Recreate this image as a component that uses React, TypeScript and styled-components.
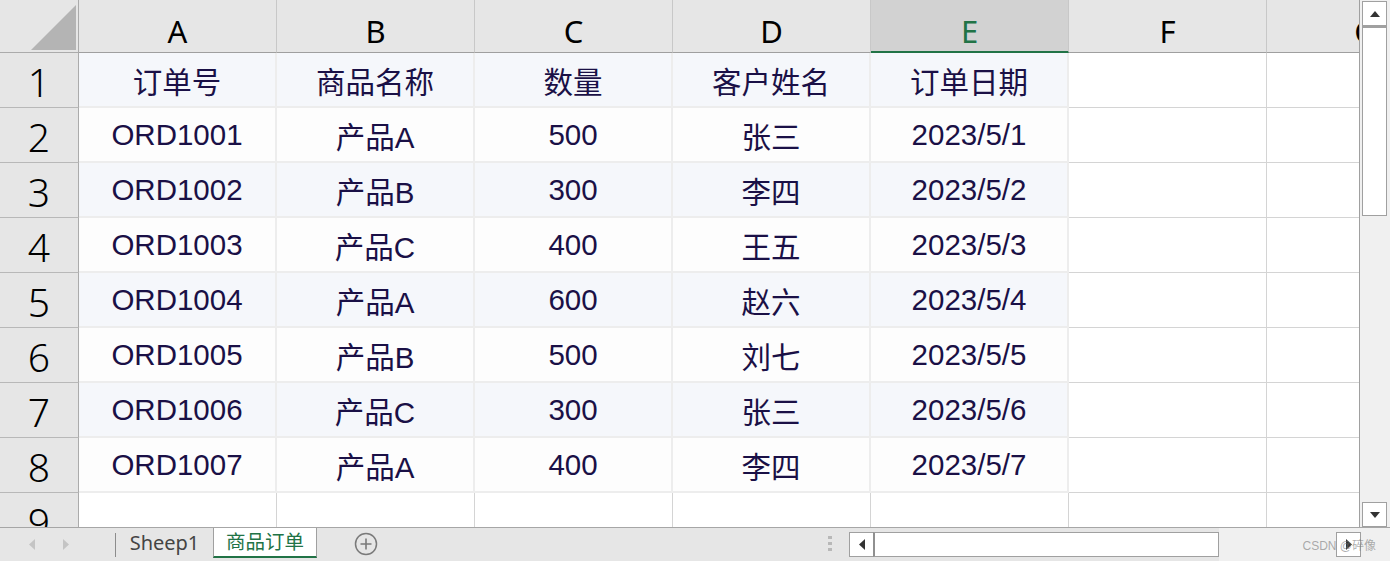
import React from 'react';
import styled, { createGlobalStyle, css } from 'styled-components';

const GlobalStyle = createGlobalStyle`
  html, body {
    margin: 0;
    padding: 0;
    background: #e6e6e6;
    overflow: hidden;
  }
  body {
    font-family: "Liberation Sans", "Noto Sans CJK SC", sans-serif;
  }
`;

const COLUMNS = ['A', 'B', 'C', 'D', 'E', 'F', 'G'];
const SELECTED_COL = 4;
const DATA_COLS = 5;

const TABLE: string[][] = [
  ['订单号', '商品名称', '数量', '客户姓名', '订单日期'],
  ['ORD1001', '产品A', '500', '张三', '2023/5/1'],
  ['ORD1002', '产品B', '300', '李四', '2023/5/2'],
  ['ORD1003', '产品C', '400', '王五', '2023/5/3'],
  ['ORD1004', '产品A', '600', '赵六', '2023/5/4'],
  ['ORD1005', '产品B', '500', '刘七', '2023/5/5'],
  ['ORD1006', '产品C', '300', '张三', '2023/5/6'],
  ['ORD1007', '产品A', '400', '李四', '2023/5/7'],
];
const ROW_COUNT = 9;

const Window = styled.div`
  width: 1390px;
  height: 561px;
  display: flex;
  flex-direction: column;
  background: #e6e6e6;
`;

const Main = styled.div`
  height: 527px;
  display: flex;
  overflow: hidden;
`;

const Viewport = styled.div`
  width: 1359px;
  flex: none;
  overflow: hidden;
  background: #fff;
`;

const Grid = styled.div`
  display: grid;
  grid-template-columns: 79px repeat(7, 198px);
  grid-template-rows: 53px repeat(${ROW_COUNT}, 55px);
  width: max-content;
`;

const Corner = styled.div`
  background: #e6e6e6;
  border-right: 1px solid #ababab;
  border-bottom: 1px solid #ababab;
  display: flex;
  justify-content: flex-end;
  align-items: flex-end;
  padding: 0 2px 2px 0;
`;

const ColHead = styled.div<{ $selected?: boolean }>`
  background: #e6e6e6;
  border-right: 1px solid #c8c8c8;
  border-bottom: 1px solid #9f9f9f;
  display: flex;
  justify-content: center;
  align-items: flex-end;
  padding-bottom: 5px;
  font-family: "Noto Sans", "Liberation Sans", sans-serif;
  font-size: 31px;
  line-height: 1;
  color: #000;
  ${({ $selected }) =>
    $selected &&
    css`
      background: #d2d2d2;
      color: #217346;
      border-bottom: 2px solid #217346;
      padding-bottom: 4px;
    `}
`;

const RowHead = styled.div`
  background: #e6e6e6;
  border-right: 1px solid #ababab;
  border-bottom: 1px solid #b8b8b8;
  display: flex;
  justify-content: center;
  align-items: center;
  padding-top: 3px;
  font-family: "Noto Sans", "Liberation Sans", sans-serif;
  font-weight: 300;
  font-size: 39px;
  line-height: 1;
  color: #000;
`;

const DataCell = styled.div<{ $striped: boolean }>`
  background: ${({ $striped }) => ($striped ? '#f5f7fb' : '#fdfdfd')};
  border-right: 2px solid #ededed;
  border-bottom: 2px solid #ededed;
  display: flex;
  justify-content: center;
  align-items: center;
  font-size: 29.5px;
  color: #1a1046;
  white-space: nowrap;
`;

const EmptyCell = styled.div`
  background: #fff;
  border-right: 1px solid #d4d4d4;
  border-bottom: 1px solid #d4d4d4;
`;

const VScroll = styled.div`
  width: 31px;
  flex: none;
  box-sizing: border-box;
  border-left: 1px solid #a0a0a0;
  background: #f0f0f0;
  padding: 1px 3px 0 2px;
  display: flex;
  flex-direction: column;
`;

const ScrollButton = styled.div`
  width: 25px;
  height: 25px;
  flex: none;
  background: #fff;
  border: 1px solid #a0a0a0;
  box-sizing: border-box;
  display: flex;
  align-items: center;
  justify-content: center;
`;

const VThumb = styled.div`
  height: 190px;
  flex: none;
  background: #fff;
  border: 1px solid #a0a0a0;
  border-top-width: 2px;
  box-sizing: border-box;
`;

const VTrack = styled.div`
  flex: 1;
`;

const TabBar = styled.div`
  position: relative;
  height: 34px;
  box-sizing: border-box;
  border-top: 1px solid #a6a6a6;
  display: flex;
  align-items: stretch;
  font-family: "Noto Sans", "Liberation Sans", "Noto Sans CJK SC", sans-serif;
`;

const NavArrows = styled.div`
  width: 115px;
  flex: none;
  display: flex;
  align-items: center;
  gap: 28px;
  padding-left: 29px;
  box-sizing: border-box;
`;

const Divider = styled.div`
  width: 1px;
  height: 24px;
  flex: none;
  align-self: center;
  background: #8c8c8c;
`;

const SheetTab = styled.div<{ $active?: boolean }>`
  width: 97px;
  flex: none;
  display: flex;
  justify-content: center;
  align-items: center;
  padding-bottom: 4px;
  font-size: 20px;
  color: #444;
  box-sizing: border-box;
  ${({ $active }) =>
    $active &&
    css`
      width: 104px;
      height: 30px;
      padding-bottom: 3px;
      background: #fff;
      color: #217346;
      border-left: 1px solid #a0a0a0;
      border-right: 1px solid #a0a0a0;
      border-bottom: 2px solid #217346;
      font-family: "Noto Sans CJK SC", sans-serif;
      font-size: 19.5px;
    `}
`;

const AddSheet = styled.div`
  margin-left: 37px;
  width: 24px;
  flex: none;
  display: flex;
  align-items: center;
  padding-bottom: 2px;
`;

const Grip = styled.div`
  margin-left: 450px;
  width: 4px;
  flex: none;
  display: flex;
  flex-direction: column;
  justify-content: center;
  gap: 3px;
  padding-bottom: 2px;
  & > span {
    width: 4px;
    height: 3px;
    background: #b8b8b8;
  }
`;

const HScroll = styled.div`
  margin-left: 17px;
  flex: 1;
  display: flex;
  align-items: center;
`;

const HThumb = styled.div`
  width: 346px;
  height: 25px;
  flex: none;
  background: #fff;
  border: 1px solid #a0a0a0;
  border-left-width: 2px;
  border-left-color: #909090;
  box-sizing: border-box;
  margin-left: -1px;
`;

const HTrack = styled.div`
  flex: 1;
  align-self: stretch;
  background: #f0f0f0;
  display: flex;
  align-items: center;
  padding-right: 29px;
`;

const Watermark = styled.div`
  position: absolute;
  right: 14px;
  top: 12px;
  font-family: "Liberation Sans", "Noto Sans CJK SC", sans-serif;
  font-size: 12px;
  line-height: 1;
  color: rgba(120, 120, 120, 0.6);
  pointer-events: none;
`;

const Arrow = ({ dir, color = '#333' }: { dir: 'up' | 'down' | 'left' | 'right'; color?: string }) => {
  const vertical = dir === 'up' || dir === 'down';
  const w = vertical ? 10 : 6;
  const h = vertical ? 6 : 11;
  const points = {
    up: '0,6 5,0 10,6',
    down: '0,0 10,0 5,6',
    left: '6,0 6,11 0,5.5',
    right: '0,0 6,5.5 0,11',
  }[dir];
  return (
    <svg width={w} height={h} viewBox={`0 0 ${w} ${h}`}>
      <polygon points={points} fill={color} />
    </svg>
  );
};

const PlusCircle = () => (
  <svg width="24" height="24" viewBox="0 0 24 24">
    <circle cx="12" cy="12" r="10.5" fill="none" stroke="#7a7a7a" strokeWidth="1.5" />
    <path d="M12 6.5v11M6.5 12h11" stroke="#7a7a7a" strokeWidth="1.6" />
  </svg>
);

const CornerTriangle = () => (
  <svg width="45" height="45" viewBox="0 0 45 45">
    <polygon points="45,0 45,45 0,45" fill="#b4b4b4" />
  </svg>
);

export default function App() {
  const bodyRows = Array.from({ length: ROW_COUNT }, (_, r) => r);

  return (
    <Window>
      <GlobalStyle />
      <Main>
        <Viewport>
          <Grid>
            <Corner>
              <CornerTriangle />
            </Corner>
            {COLUMNS.map((c, i) => (
              <ColHead key={c} $selected={i === SELECTED_COL}>
                {c}
              </ColHead>
            ))}
            {bodyRows.map((r) => (
              <React.Fragment key={r}>
                <RowHead>{r + 1}</RowHead>
                {COLUMNS.map((c, ci) => {
                  const value = TABLE[r]?.[ci];
                  if (r < TABLE.length && ci < DATA_COLS) {
                    return (
                      <DataCell key={c} $striped={r % 2 === 0}>
                        {value}
                      </DataCell>
                    );
                  }
                  return <EmptyCell key={c} />;
                })}
              </React.Fragment>
            ))}
          </Grid>
        </Viewport>
        <VScroll>
          <ScrollButton>
            <Arrow dir="up" />
          </ScrollButton>
          <VThumb />
          <VTrack />
          <ScrollButton>
            <Arrow dir="down" />
          </ScrollButton>
        </VScroll>
      </Main>

      <TabBar>
        <NavArrows>
          <Arrow dir="left" color="#c4c4c4" />
          <Arrow dir="right" color="#c4c4c4" />
        </NavArrows>
        <Divider />
        <SheetTab>Sheep1</SheetTab>
        <SheetTab $active>商品订单</SheetTab>
        <AddSheet>
          <PlusCircle />
        </AddSheet>
        <Grip>
          <span />
          <span />
          <span />
        </Grip>
        <HScroll>
          <ScrollButton>
            <Arrow dir="left" />
          </ScrollButton>
          <HThumb />
          <HTrack>
            <div style={{ flex: 1 }} />
            <ScrollButton>
              <Arrow dir="right" />
            </ScrollButton>
          </HTrack>
        </HScroll>
        <Watermark>CSDN @碎像</Watermark>
      </TabBar>
    </Window>
  );
}
